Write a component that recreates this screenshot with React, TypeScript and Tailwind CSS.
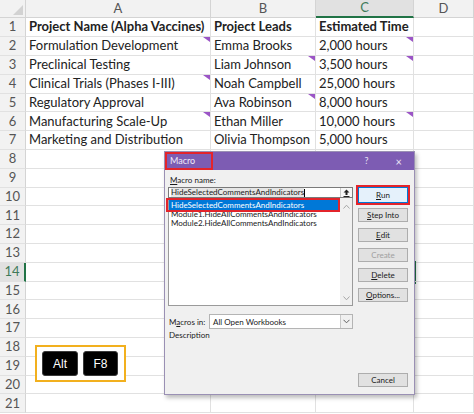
import React from 'react';

const data: string[][] = [
  ['Project Name (Alpha Vaccines)', 'Project Leads', 'Estimated Time'],
  ['Formulation Development', 'Emma Brooks', '2,000 hours'],
  ['Preclinical Testing', 'Liam Johnson', '3,500 hours'],
  ['Clinical Trials (Phases I-III)', 'Noah Campbell', '25,000 hours'],
  ['Regulatory Approval', 'Ava Robinson', '8,000 hours'],
  ['Manufacturing Scale-Up', 'Ethan Miller', '10,000 hours'],
  ['Marketing and Distribution', 'Olivia Thompson', '5,000 hours'],
];

const comments: Record<string, boolean> = {
  '2-0': true, '4-0': true, '6-0': true,
  '3-1': true, '5-1': true,
  '2-2': true, '3-2': true, '6-2': true,
};

function Tri() {
  return (
    <svg className="absolute top-0 right-0" width="7" height="5" viewBox="0 0 7 5">
      <polygon points="0,0 7,0 7,5" fill="#9b55c6" />
    </svg>
  );
}

function Btn({ children, disabled, className }: { children: React.ReactNode; disabled?: boolean; className?: string }) {
  return (
    <div
      className={
        'h-[14px] w-[50px] flex items-center justify-center bg-[#e1e1e1] border border-[#adadad] text-[8px] leading-none ' +
        (disabled ? 'text-[#a0a0a0] ' : 'text-[#1a1a1a] ') +
        (className || '')
      }
    >
      {children}
    </div>
  );
}

function Dialog() {
  return (
    <div className="absolute left-[164px] top-[151px] w-[251px] h-[244px] bg-[#f0f0f0] border border-[#9a90b4] shadow-[2px_3px_4px_rgba(0,0,0,0.25)] font-['Lato',sans-serif] text-[#1a1a1a] flex flex-col">
      {/* title bar */}
      <div className="h-[18px] bg-[#7d5cb3] flex items-center text-white shrink-0">
        <div className="w-[48px] h-[18px] border-2 border-[#e3242b] flex items-center pl-[3px] text-[9px] text-[#f0eaf8]">Macro</div>
        <span className="ml-auto text-[9px] text-[#e8e0f4] mr-[27px]">?</span>
        <span className="text-[11px] text-[#ece4f6] mr-[12px] leading-none">×</span>
      </div>
      {/* body */}
      <div className="flex flex-1 pl-[3px]">
        {/* left column */}
        <div className="w-[185px] flex flex-col pt-[4px]">
          <div className="h-[13px] text-[8px] leading-[13px] pl-[2px]">
            <span className="underline">M</span>acro name:
          </div>
          <div className="h-[11px] flex bg-white border border-[#7a7a7a]">
            <div className="flex-1 flex items-center pl-[2px] text-[8px] leading-[9px]">
              <span className="bg-[#e6e6e6]">HideSelectedCommentsAndIndicators</span>
              <span className="w-px h-[8px] bg-black" />
            </div>
            <div className="w-[12px] flex items-center justify-center border-l border-[#c8c8c8] bg-[#f7f7f7]">
              <svg width="7" height="8" viewBox="0 0 7 8">
                <path d="M3.5 0.5 L6.5 3.5 L4.5 3.5 L4.5 6 L2.5 6 L2.5 3.5 L0.5 3.5 Z" fill="#222" />
                <rect x="0.5" y="7" width="6" height="1" fill="#222" />
              </svg>
            </div>
          </div>
          <div className="relative h-[108px] flex bg-white border border-[#9a9a9a] border-t-0">
            <div className="flex-1 flex flex-col pt-[2px] text-[8px] leading-[9px]">
              <div className="h-[10px] flex items-center pl-[2px] bg-[#0078d7] text-white">HideSelectedCommentsAndIndicators</div>
              <div className="h-[9px] flex items-center pl-[2px]">Module1.HideAllCommentsAndIndicators</div>
              <div className="h-[9px] flex items-center pl-[2px]">Module2.HideAllCommentsAndIndicators</div>
            </div>
            <div className="w-[12px] bg-[#f0f0f0] flex flex-col items-center justify-between pt-[6px] pb-[4px]">
              <svg width="7" height="5" viewBox="0 0 7 5">
                <path d="M0.5 4.5 L3.5 1.2 L6.5 4.5" stroke="#a6a6a6" strokeWidth="1" fill="none" />
              </svg>
              <svg width="7" height="5" viewBox="0 0 7 5">
                <path d="M0.5 0.5 L3.5 3.8 L6.5 0.5" stroke="#a6a6a6" strokeWidth="1" fill="none" />
              </svg>
            </div>
            <div className="absolute left-[-3px] top-[0px] w-[174px] h-[14px] border-2 border-[#e3242b]" />
          </div>
          <div className="mt-[8px] h-[15px] flex items-center">
            <div className="w-[41px] text-[8px] pl-[1px] whitespace-nowrap">
              M<span className="underline">a</span>cros in:
            </div>
            <div className="flex-1 h-[15px] flex bg-white border border-[#b4b4b4]">
              <div className="flex-1 flex items-center pl-[3px] text-[8px]">All Open Workbooks</div>
              <div className="w-[12px] flex items-center justify-center bg-[#f0f0f0] border-l border-[#c8c8c8]">
                <svg width="7" height="5" viewBox="0 0 7 5">
                  <path d="M0.5 0.8 L3.5 3.8 L6.5 0.8" stroke="#606060" strokeWidth="1" fill="none" />
                </svg>
              </div>
            </div>
          </div>
          <div className="h-[13px] text-[8px] leading-[13px] pl-[1px]">Description</div>
        </div>
        {/* right column */}
        <div className="w-[50px] ml-[5px] flex flex-col pt-[17px] pb-[7px]">
          <div className="relative">
            <div className="h-[16px] w-[50px] flex items-center justify-center bg-[#e5f1fb] border border-[#0078d7] text-[8px] leading-none">
              <span className="underline">R</span>un
            </div>
            <div className="absolute -left-[2px] -top-[2px] -right-[2px] -bottom-[2px] border-2 border-[#e3242b]" />
          </div>
          <Btn className="mt-[5px]"><span className="underline">S</span>tep Into</Btn>
          <Btn className="mt-[6px]"><span className="underline">E</span>dit</Btn>
          <Btn className="mt-[6px]" disabled>Create</Btn>
          <Btn className="mt-[6px]"><span className="underline">D</span>elete</Btn>
          <Btn className="mt-[6px]"><span className="underline">O</span>ptions...</Btn>
          <Btn className="mt-auto">Cancel</Btn>
        </div>
      </div>
    </div>
  );
}

export default function App() {
  const colHeaders = ['A', 'B', 'C', 'D'];
  const widths = ['w-[185px]', 'w-[105px]', 'w-[98px]', 'w-[60px]'];
  const rowNums = Array.from({ length: 21 }, (_, i) => i + 1);
  return (
    <div className="relative w-[474px] h-[414px] overflow-hidden bg-white font-['Lato',sans-serif]">
      {/* header row */}
      <div className="flex h-[18px]">
        <div className="relative w-[26px] h-[18px] bg-[#f2f2f2] border-r border-b border-[#d4d4d4]">
          <svg className="absolute right-[2px] bottom-[2px]" width="10" height="10" viewBox="0 0 10 10">
            <polygon points="10,0 10,10 0,10" fill="#d2d2d2" />
          </svg>
        </div>
        {colHeaders.map((c, i) => (
          <div
            key={c}
            className={
              widths[i] +
              ' h-[18px] flex items-center justify-center text-[13px] border-r border-[#d4d4d4] ' +
              (c === 'C'
                ? 'bg-[#e1e1e1] text-[#3f7a5a] border-b-2 border-b-[#217346]'
                : 'bg-[#f2f2f2] text-[#555] border-b border-b-[#d4d4d4]')
            }
          >
            {c}
          </div>
        ))}
      </div>
      {rowNums.map((r) => {
        const row = data[r - 1];
        return (
          <div key={r} className={'flex ' + (r === 1 ? 'h-[19.3px]' : 'h-[18.8px]')}>
            <div
              className={
                'w-[26px] h-full flex items-center justify-center text-[13px] border-b border-[#e1e1e1] ' +
                (r === 14
                  ? 'bg-[#e1e1e1] text-[#3f7a5a] border-r-2 border-r-[#217346]'
                  : 'bg-[#f2f2f2] text-[#555] border-r border-r-[#d4d4d4]')
              }
            >
              {r}
            </div>
            {widths.map((w, ci) => {
              const text = row && ci < 3 ? row[ci] : '';
              const hasC = comments[`${r}-${ci}`];
              return (
                <div
                  key={ci}
                  className={
                    'relative ' + w +
                    ' h-full flex items-center pl-[3px] whitespace-nowrap overflow-hidden border-r border-b border-[#e1e1e1] text-[13px] text-[#222] ' +
                    (r === 1 ? 'font-bold' : '') +
                    (r === 14 && ci === 2 ? ' outline-2 outline-[#217346]' : '')
                  }
                >
                  {text}
                  {hasC && <Tri />}
                </div>
              );
            })}
          </div>
        );
      })}

      <Dialog />

      {/* Alt + F8 shortcut */}
      <div className="absolute left-[35px] top-[345px] w-[91px] h-[37px] border-2 border-[#f2b01e] bg-white flex items-center pl-[5px] gap-[5px]">
        <div className="w-[36px] h-[25px] rounded-[3px] bg-black border border-[#3a3a3a] flex items-center justify-center text-white text-[12px] font-['Liberation_Sans',sans-serif]">Alt</div>
        <div className="w-[35px] h-[25px] rounded-[3px] bg-black border border-[#3a3a3a] flex items-center justify-center text-white text-[12px] font-['Liberation_Sans',sans-serif]">F8</div>
      </div>
    </div>
  );
}
